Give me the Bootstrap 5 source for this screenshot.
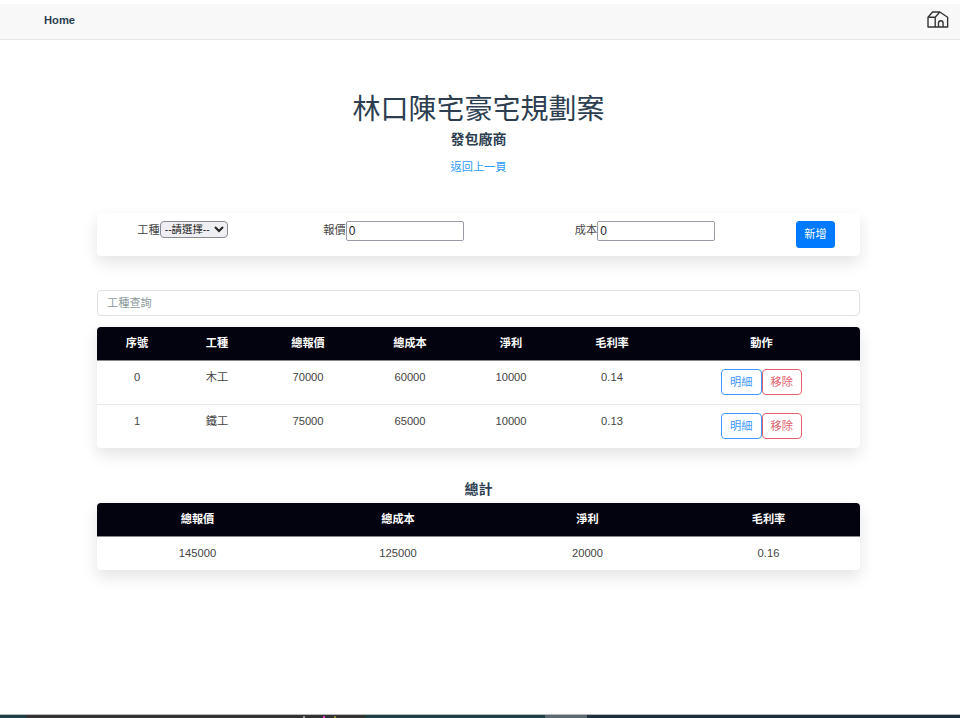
<!DOCTYPE html>
<html lang="zh-Hant">
<head>
<meta charset="utf-8">
<title>林口陳宅豪宅規劃案</title>
<link href="https://cdn.jsdelivr.net/npm/bootstrap@5.3.0/dist/css/bootstrap.min.css" rel="stylesheet">
<style>
html,body{height:100%;}
body{font-family:"Liberation Sans","Noto Sans CJK TC",sans-serif;font-size:11.2px;color:#2c3e50;background:#fff;min-height:718px;display:flex;flex-direction:column;overflow:hidden;}
.topbar{height:36px;padding:0 11px 2px 44px;background:#f8f8f8;border-bottom:1px solid #e5e5e5;flex:none;}
.topbar .navbar-brand{font-size:11.2px;font-weight:700;color:#2c3e50;padding:0;margin:0;}
.house{width:23px;height:18px;display:block;margin-bottom:3px;}
.house path{fill:none;stroke:#333;stroke-width:4.2;stroke-linejoin:round;}
.page-wrap{width:763px;margin:0 auto 0 97px;}
.ttl{font-size:28px;font-weight:400;line-height:34px;margin:53px 0 0;color:#2c3e50;}
.subttl{font-size:14px;font-weight:700;line-height:17px;margin:4px 0 0;color:#2c3e50;}
.back{display:block;font-size:11.2px;line-height:17px;margin-top:11px;color:#2e9bff;text-decoration:none;}
.entry{height:43px;margin-top:37px;display:grid;grid-template-columns:171px 251px 252px 89px;padding-top:8px;border-radius:4px;}
.entry-cell{display:flex;justify-content:center;align-items:flex-start;color:#444;}
.entry-cell label{line-height:18px;}
.entry select{font:10.4px "Liberation Sans","Noto Sans CJK TC",sans-serif;width:68px;height:17px;border:1px solid #8a8a96;border-radius:4px;background:#efeff3;padding:0;color:#222;}
.entry input{font:12px "Liberation Sans",sans-serif;width:118px;height:20px;border:1px solid #9a9aa6;border-radius:2px;padding:0 2px;color:#222;}
.add-btn{font-size:11.2px;width:39px;height:27px;padding:0;background:#007bff;border-color:#007bff;border-radius:3px;}
.search{height:26px;margin-top:34px;font-size:11.2px;padding:0 9px;border:1px solid #dee2e6;border-radius:4px;}
.search::placeholder{color:#8b9a9b;}
.data-wrap{border-radius:4px;overflow:hidden;background:#fff;}
.lift{box-shadow:0 .4rem 1rem rgba(0,0,0,.11);}
.data-wrap .table{margin:0;table-layout:fixed;font-size:11.2px;}
.data-wrap th{background:#03030f;color:#fff;font-weight:700;text-align:center;padding:8px;line-height:17px;border-bottom:1px solid #8a8a8a;}
.data-wrap td{text-align:center;padding:8px;line-height:17px;color:#444;border-bottom:1px solid #e8e8e8;vertical-align:top;}
.t-main td{padding-bottom:9px;}
.data-wrap tr:last-child td{border-bottom:0;}
.t-main{margin-top:11px;}
.c80{width:80px;}.c102{width:102px;}.c100{width:100px;}.c197{width:197px;}
.c201{width:201px;}.c200{width:200px;}.c179{width:179px;}.c183{width:183px;}
.act{font-size:11.2px;width:40.5px;height:26px;padding:0;border-radius:4px;background:#fff;}
.act-info{color:#3d97ff;border:1px solid #3d97ff;}
.act-del{color:#e4606d;border:1px solid #e4606d;}
.sum-ttl{font-size:14px;font-weight:700;line-height:17px;margin:33px 0 5px;color:#2c3e50;}
.task{height:4px;margin-top:auto;display:flex;flex:none;border-top:1px solid #b8b8b8;}
.task i{display:flex;height:100%;align-items:flex-end;}
.tk1{width:26px;background:#1f3f48;}.tk2{width:339px;background:#333;}.tk3{width:180px;background:#1f3f48;}.tk4{width:42px;background:#5a6a6e;}.tk5{flex:1;background:#1c3040;}
.task b{display:block;width:2px;height:2px;}
.m1{margin-left:277px;background:#999;}.m2{margin-left:18px;background:#e040c0;}.m3{margin-left:9px;background:#8a8a3a;}
</style>
</head>
<body>
<nav class="navbar topbar mt-1 d-flex justify-content-between align-items-center flex-nowrap">
  <a class="navbar-brand" href="#">Home</a>
  <svg class="house" viewBox="138 30 70 55" aria-hidden="true"><path d="M144 82V52L158 36H180L204 52V82Z"/><path d="M144 52H166L180 36M166 52V82M176 82V70a6 6 0 0 1 14 0V82"/></svg>
</nav>
<main class="page-wrap">
  <div class="text-center">
    <h1 class="ttl">林口陳宅豪宅規劃案</h1>
    <h2 class="subttl">發包廠商</h2>
    <a class="back" href="#">返回上一頁</a>
  </div>
  <form class="entry bg-white lift">
    <div class="entry-cell"><label for="f1">工種</label><select id="f1"><option>--請選擇--</option></select></div>
    <div class="entry-cell"><label for="f2">報價</label><input id="f2" value="0"></div>
    <div class="entry-cell"><label for="f3">成本</label><input id="f3" value="0"></div>
    <div class="entry-cell"><button type="button" class="btn btn-primary add-btn">新增</button></div>
  </form>
  <input class="form-control search" placeholder="工種查詢">
  <div class="data-wrap t-main lift">
    <table class="table">
      <thead><tr><th class="c80">序號</th><th class="c80">工種</th><th class="c102">總報價</th><th class="c102">總成本</th><th class="c100">淨利</th><th class="c102">毛利率</th><th class="c197">動作</th></tr></thead>
      <tbody>
        <tr><td>0</td><td>木工</td><td>70000</td><td>60000</td><td>10000</td><td>0.14</td><td><button class="btn act act-info">明細</button><button class="btn act act-del">移除</button></td></tr>
        <tr><td>1</td><td>鐵工</td><td>75000</td><td>65000</td><td>10000</td><td>0.13</td><td><button class="btn act act-info">明細</button><button class="btn act act-del">移除</button></td></tr>
      </tbody>
    </table>
  </div>
  <h3 class="sum-ttl text-center">總計</h3>
  <div class="data-wrap lift">
    <table class="table">
      <thead><tr><th class="c201">總報價</th><th class="c200">總成本</th><th class="c179">淨利</th><th class="c183">毛利率</th></tr></thead>
      <tbody><tr><td>145000</td><td>125000</td><td>20000</td><td>0.16</td></tr></tbody>
    </table>
  </div>
</main>
<div class="task"><i class="tk1"></i><i class="tk2"><b class="m1"></b><b class="m2"></b><b class="m3"></b></i><i class="tk3"></i><i class="tk4"></i><i class="tk5"></i></div>
</body>
</html>
